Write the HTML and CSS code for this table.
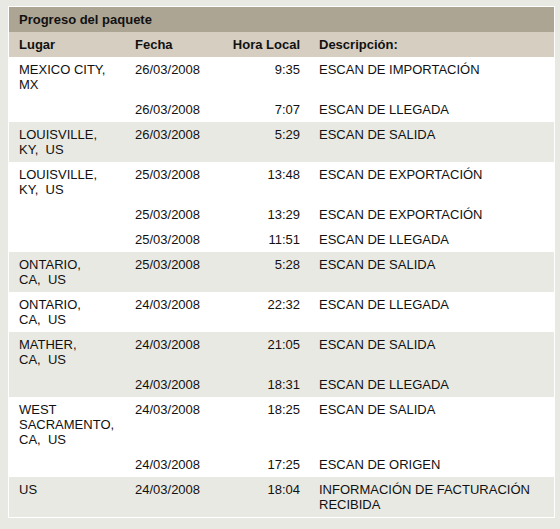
FILE: index.html
```html
<!DOCTYPE html>
<html lang="es">
<head>
<meta charset="utf-8">
<title>Progreso del paquete</title>
<link rel="stylesheet" href="styles.css">
</head>
<body>
<div class="panel">
  <div class="title">Progreso del paquete</div>
  <table class="track">
    <colgroup>
      <col class="c-lugar"><col class="c-fecha"><col class="c-hora"><col class="c-desc">
    </colgroup>
    <thead>
      <tr><th>Lugar</th><th>Fecha</th><th class="num">Hora Local</th><th>Descripción:</th></tr>
    </thead>
    <tbody>
      <tr><td>MEXICO CITY,<br>MX</td><td>26/03/2008</td><td class="num">9:35</td><td>ESCAN DE IMPORTACIÓN</td></tr>
      <tr><td></td><td>26/03/2008</td><td class="num">7:07</td><td>ESCAN DE LLEGADA</td></tr>
    </tbody>
    <tbody class="alt">
      <tr><td>LOUISVILLE,<br>KY,&nbsp; US</td><td>26/03/2008</td><td class="num">5:29</td><td>ESCAN DE SALIDA</td></tr>
    </tbody>
    <tbody>
      <tr><td>LOUISVILLE,<br>KY,&nbsp; US</td><td>25/03/2008</td><td class="num">13:48</td><td>ESCAN DE EXPORTACIÓN</td></tr>
      <tr><td></td><td>25/03/2008</td><td class="num">13:29</td><td>ESCAN DE EXPORTACIÓN</td></tr>
      <tr><td></td><td>25/03/2008</td><td class="num">11:51</td><td>ESCAN DE LLEGADA</td></tr>
    </tbody>
    <tbody class="alt">
      <tr><td>ONTARIO,<br>CA,&nbsp; US</td><td>25/03/2008</td><td class="num">5:28</td><td>ESCAN DE SALIDA</td></tr>
    </tbody>
    <tbody>
      <tr><td>ONTARIO,<br>CA,&nbsp; US</td><td>24/03/2008</td><td class="num">22:32</td><td>ESCAN DE LLEGADA</td></tr>
    </tbody>
    <tbody class="alt">
      <tr><td>MATHER,<br>CA,&nbsp; US</td><td>24/03/2008</td><td class="num">21:05</td><td>ESCAN DE SALIDA</td></tr>
      <tr><td></td><td>24/03/2008</td><td class="num">18:31</td><td>ESCAN DE LLEGADA</td></tr>
    </tbody>
    <tbody>
      <tr><td>WEST<br>SACRAMENTO,<br>CA,&nbsp; US</td><td>24/03/2008</td><td class="num">18:25</td><td>ESCAN DE SALIDA</td></tr>
      <tr><td></td><td>24/03/2008</td><td class="num">17:25</td><td>ESCAN DE ORIGEN</td></tr>
    </tbody>
    <tbody class="alt">
      <tr><td>US</td><td>24/03/2008</td><td class="num">18:04</td><td>INFORMACIÓN DE FACTURACIÓN<br>RECIBIDA</td></tr>
    </tbody>
  </table>
</div>
</body>
</html>
```
FILE: styles.css
```css
html, body {
  margin: 0;
  background: #e9e9e3;
}
body {
  padding: 6px 0 0 8px;
  font-family: "Liberation Sans", Arial, Helvetica, sans-serif;
  font-size: 13px;
  line-height: 15px;
  color: #111;
}
.panel {
  width: 545px;
  border: 1px solid #ffffff;
  background: #ffffff;
}
.title {
  background: #ada594;
  height: 25px;
  line-height: 25px;
  padding: 0 10px;
  font-weight: bold;
  color: #111;
}
.track {
  width: 545px;
  border-collapse: collapse;
  table-layout: fixed;
}
.c-lugar { width: 116px; }
.c-fecha { width: 90px; }
.c-hora { width: 95px; }
.c-desc { width: 244px; }
.track th {
  background: #d5cec1;
  height: 15px;
  padding: 5px 10px;
  text-align: left;
  font-weight: bold;
  vertical-align: top;
}
.track td {
  padding: 5px 10px;
  vertical-align: top;
  height: 15px;
}
.track td:last-child, .track th:last-child {
  padding-left: 9px;
}
.track .num {
  text-align: right;
}
.track tbody.alt td {
  background: #e9e9e3;
}
```
